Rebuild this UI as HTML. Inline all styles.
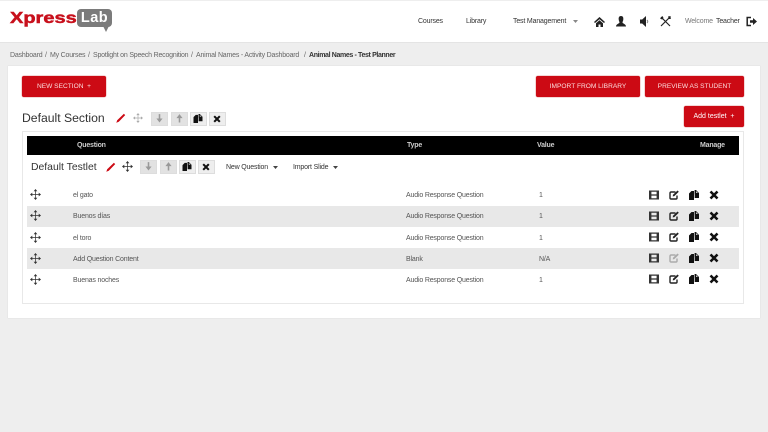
<!DOCTYPE html>
<html><head><meta charset="utf-8"><style>
html,body{margin:0;padding:0;background:#eee}
#p{width:768px;height:432px;overflow:hidden;background:#eee;font-family:"Liberation Sans",sans-serif;position:relative;filter:blur(.25px)}
.a{position:absolute;white-space:nowrap}
.t{font-size:7px;color:#555;line-height:10px;letter-spacing:-.17px}
.btn{position:absolute;background:#cc0a14;border-radius:2px;color:#fbdcdc;font-size:6.6px;line-height:21px;text-align:center;height:21px;box-shadow:0 0 1px #b00}
.g{position:absolute;width:17px;height:14px;background:#e2e2e2;border:1px solid #ddd;box-sizing:border-box}
.row{position:absolute;left:27px;width:712px;height:21px}
.alt{background:#e8e8e8}
svg{position:absolute;overflow:visible}
</style></head><body><div id="p">
<svg width="0" height="0" style="position:absolute"><defs>
<symbol id="move" viewBox="0 0 12 12"><path d="M6 0L8 2.5H6.4V5.6H9.5V4L12 6 9.5 8V6.4H6.4V9.5H8L6 12 4 9.5H5.6V6.4H2.5V8L0 6 2.5 4V5.6H5.6V2.5H4Z" fill="currentColor"/></symbol>
<symbol id="x" viewBox="0 0 10 10"><path d="M1.5 1.5L8.5 8.5M8.5 1.5L1.5 8.5" stroke="currentColor" stroke-width="2.6" fill="none"/></symbol>
<symbol id="copy" viewBox="0 0 10 10"><path d="M0 3.5L2.5 1H5V10H0Z" fill="currentColor"/><path d="M5.6 0H7L10 3V8H5.7V4.5L5.6 4Z" fill="currentColor"/><path d="M7 1V3H9Z" fill="#fff" opacity=".75"/></symbol>
<symbol id="film" viewBox="0 0 10 10"><path fill-rule="evenodd" d="M0 0.5H10V9.5H0ZM2.4 1.7V4.4H7.6V1.7ZM2.4 5.6V8.3H7.6V5.6Z" fill="currentColor"/></symbol>
<symbol id="edit" viewBox="0 0 10 10"><path d="M6.5 2H2.2Q1 2 1 3.2V8Q1 9 2.2 9H7Q8 9 8 8V5.5" stroke="currentColor" stroke-width="1.4" fill="none"/><path d="M4 4.7L8.5 0.5 9.8 1.8 5.3 6.1 3.7 6.4Z" fill="currentColor"/></symbol>
<symbol id="pencil" viewBox="0 0 10 10"><path d="M0.3 9.7L1.2 7.2 7.9 0.8 9.2 2.1 2.8 8.7Z" fill="currentColor"/></symbol>
<symbol id="down" viewBox="0 0 8 10"><path d="M3.1 0H4.9V5H7.5L4 9.5 0.5 5H3.1Z" fill="currentColor"/></symbol>
<symbol id="up" viewBox="0 0 8 10"><path d="M3.1 9.5H4.9V4.5H7.5L4 0 0.5 4.5H3.1Z" fill="currentColor"/></symbol>
</defs></svg>

<!-- header -->
<div class="a" style="left:0;top:1px;width:768px;height:41px;background:#fff;border-bottom:1px solid #e4e4e4"></div>
<div class="a" style="left:10px;top:9px;font-size:16px;font-weight:bold;color:#c8101c;line-height:20px;transform:scaleX(1.25);transform-origin:left top;-webkit-text-stroke:.5px #c8101c">Xpress</div>
<div class="a" style="left:77px;top:9px;width:35px;height:18px;background:#7b7b7b;border-radius:4px;color:#fff;font-size:14.5px;font-weight:bold;line-height:18px;text-align:center;letter-spacing:.5px">Lab</div>
<svg style="left:103px;top:26px" width="7" height="7"><path d="M0 0H6L3 6Z" fill="#7b7b7b"/></svg>

<div class="a t" style="left:418px;top:17px;color:#333">Courses</div>
<div class="a t" style="left:466px;top:17px;color:#333">Library</div>
<div class="a t" style="left:513px;top:17px;color:#333">Test Management</div>
<svg style="left:573px;top:20px" width="5" height="3"><path d="M0 0H5L2.5 3Z" fill="#888"/></svg>
<svg style="left:594px;top:17px" width="11" height="10"><path d="M5.5 0L11 5 10 6 5.5 2.2 1 6 0 5ZM2 6.3L5.5 3.3 9 6.3V10H6.5V7.5H4.5V10H2Z" fill="#222"/></svg>
<svg style="left:616px;top:16px" width="10" height="11"><path d="M5 0C7 0 7.5 1.5 7.3 3.5 7.2 5 6.5 5.5 6.5 6.5 6.5 7.5 10 8 10 10.5H0C0 8 3.5 7.5 3.5 6.5 3.5 5.5 2.8 5 2.7 3.5 2.5 1.5 3 0 5 0Z" fill="#222"/></svg>
<svg style="left:640px;top:16px" width="9" height="11"><path d="M0 3.5H2.2L6 0V11L2.2 7.5H0Z" fill="#222"/><path d="M7 4C8 5 8 6 7 7" stroke="#888" fill="none"/></svg>
<svg style="left:660px;top:16px" width="11" height="11"><path d="M1 1L10 10M10 1L1 10" stroke="#222" stroke-width="1.2"/><path d="M0 2.5L2.5 0 3.5 2 2 3.5ZM8 0.5L10.5 0 10.8 3 8.8 3Z" fill="#222"/></svg>
<div class="a t" style="left:685px;top:17px;color:#777">Welcome</div>
<div class="a t" style="left:716px;top:17px;color:#333">Teacher</div>
<svg style="left:746px;top:16px" width="11" height="11"><path d="M5 1.5H1.2V9.5H5" stroke="#222" stroke-width="1.5" fill="none"/><path d="M4 4.3H7V2L11 5.5 7 9V6.7H4Z" fill="#222"/></svg>

<!-- breadcrumb -->
<div class="a t" style="left:10px;top:51px;color:#666;letter-spacing:-.2px">Dashboard</div>
<div class="a t" style="left:45px;top:51px;color:#666">/</div>
<div class="a t" style="left:50px;top:51px;color:#666;letter-spacing:-.2px">My Courses</div>
<div class="a t" style="left:88px;top:51px;color:#666">/</div>
<div class="a t" style="left:93px;top:51px;color:#666;letter-spacing:-.2px">Spotlight on Speech Recognition</div>
<div class="a t" style="left:191px;top:51px;color:#666">/</div>
<div class="a t" style="left:196px;top:51px;color:#666;letter-spacing:-.2px">Animal Names - Activity Dashboard</div>
<div class="a t" style="left:304px;top:51px;color:#666">/</div>
<div class="a t" style="left:309px;top:51px;color:#333;font-weight:bold;letter-spacing:-.36px">Animal Names - Test Planner</div>

<!-- card -->
<div class="a" style="left:8px;top:66px;width:752px;height:252px;background:#fff;box-shadow:0 0 1px #ccc"></div>
<div class="btn" style="left:22px;top:76px;width:84px">NEW SECTION &nbsp;+</div>
<div class="btn" style="left:536px;top:76px;width:104px">IMPORT FROM LIBRARY</div>
<div class="btn" style="left:645px;top:76px;width:99px">PREVIEW AS STUDENT</div>
<div class="btn" style="left:684px;top:106px;width:60px;color:#fff;font-size:7px">Add testlet &nbsp;+</div>

<div class="a" style="left:22px;top:110px;font-size:12.2px;line-height:16px;color:#333">Default Section</div>
<svg style="left:116px;top:113px;color:#cc0a14" width="10" height="10"><use href="#pencil"/></svg>
<svg style="left:133px;top:113px;color:#aaa" width="10" height="10"><use href="#move"/></svg>
<div class="g" style="left:151px;top:112px"></div><svg style="left:156px;top:114px;color:#999" width="7" height="9"><use href="#down"/></svg>
<div class="g" style="left:171px;top:112px"></div><svg style="left:176px;top:114px;color:#999" width="7" height="9"><use href="#up"/></svg>
<div class="g" style="left:190px;top:112px;background:#eee"></div><svg style="left:193px;top:114px;color:#111" width="10" height="9"><use href="#copy"/></svg>
<div class="g" style="left:209px;top:112px;background:#eee"></div><svg style="left:213px;top:115px;color:#111" width="8" height="8"><use href="#x"/></svg>

<!-- inner panel -->
<div class="a" style="left:22px;top:131px;width:722px;height:173px;background:#fff;border:1px solid #e8e8e8;box-sizing:border-box"></div>
<div class="a" style="left:27px;top:136px;width:712px;height:19px;background:#000"></div>
<div class="a t" style="left:77px;top:141px;color:#ccc;font-weight:bold;letter-spacing:-.2px">Question</div>
<div class="a t" style="left:407px;top:141px;color:#ccc;font-weight:bold;letter-spacing:-.2px">Type</div>
<div class="a t" style="left:537px;top:141px;color:#ccc;font-weight:bold;letter-spacing:-.2px">Value</div>
<div class="a t" style="left:700px;top:141px;color:#ccc;font-weight:bold;letter-spacing:-.2px">Manage</div>

<div class="a" style="left:31px;top:160px;font-size:10.4px;line-height:16px;color:#333">Default Testlet</div>
<svg style="left:106px;top:162px;color:#cc0a14" width="10" height="10"><use href="#pencil"/></svg>
<svg style="left:122px;top:161px;color:#333" width="11" height="11"><use href="#move"/></svg>
<div class="g" style="left:140px;top:160px"></div><svg style="left:145px;top:162px;color:#999" width="7" height="9"><use href="#down"/></svg>
<div class="g" style="left:160px;top:160px"></div><svg style="left:165px;top:162px;color:#999" width="7" height="9"><use href="#up"/></svg>
<div class="g" style="left:179px;top:160px;background:#eee"></div><svg style="left:182px;top:162px;color:#111" width="10" height="9"><use href="#copy"/></svg>
<div class="g" style="left:198px;top:160px;background:#eee"></div><svg style="left:202px;top:163px;color:#111" width="8" height="8"><use href="#x"/></svg>
<div class="a t" style="left:226px;top:163px;color:#333">New Question</div>
<svg style="left:273px;top:166px" width="5" height="3"><path d="M0 0H5L2.5 3Z" fill="#444"/></svg>
<div class="a t" style="left:293px;top:163px;color:#333">Import Slide</div>
<svg style="left:333px;top:166px" width="5" height="3"><path d="M0 0H5L2.5 3Z" fill="#444"/></svg>

<div class="row alt" style="top:206px"></div>
<div class="row alt" style="top:248px"></div>

<!-- row 1 -->
<svg style="left:30px;top:189px;color:#333" width="11" height="11"><use href="#move"/></svg>
<div class="a t" style="left:73px;top:191px">el gato</div><div class="a t" style="left:406px;top:191px">Audio Response Question</div><div class="a t" style="left:539px;top:191px">1</div>
<svg style="left:649px;top:190px;color:#333" width="10" height="10"><use href="#film"/></svg><svg style="left:669px;top:190px;color:#222" width="10" height="10"><use href="#edit"/></svg><svg style="left:689px;top:190px;color:#111" width="10" height="10"><use href="#copy"/></svg><svg style="left:709px;top:190px;color:#111" width="10" height="10"><use href="#x"/></svg>
<!-- row 2 -->
<svg style="left:30px;top:210px;color:#333" width="11" height="11"><use href="#move"/></svg>
<div class="a t" style="left:73px;top:212px">Buenos días</div><div class="a t" style="left:406px;top:212px">Audio Response Question</div><div class="a t" style="left:539px;top:212px">1</div>
<svg style="left:649px;top:211px;color:#333" width="10" height="10"><use href="#film"/></svg><svg style="left:669px;top:211px;color:#222" width="10" height="10"><use href="#edit"/></svg><svg style="left:689px;top:211px;color:#111" width="10" height="10"><use href="#copy"/></svg><svg style="left:709px;top:211px;color:#111" width="10" height="10"><use href="#x"/></svg>
<!-- row 3 -->
<svg style="left:30px;top:232px;color:#333" width="11" height="11"><use href="#move"/></svg>
<div class="a t" style="left:73px;top:234px">el toro</div><div class="a t" style="left:406px;top:234px">Audio Response Question</div><div class="a t" style="left:539px;top:234px">1</div>
<svg style="left:649px;top:232px;color:#333" width="10" height="10"><use href="#film"/></svg><svg style="left:669px;top:232px;color:#222" width="10" height="10"><use href="#edit"/></svg><svg style="left:689px;top:232px;color:#111" width="10" height="10"><use href="#copy"/></svg><svg style="left:709px;top:232px;color:#111" width="10" height="10"><use href="#x"/></svg>
<!-- row 4 -->
<svg style="left:30px;top:253px;color:#333" width="11" height="11"><use href="#move"/></svg>
<div class="a t" style="left:73px;top:255px">Add Question Content</div><div class="a t" style="left:406px;top:255px">Blank</div><div class="a t" style="left:539px;top:255px">N/A</div>
<svg style="left:649px;top:253px;color:#333" width="10" height="10"><use href="#film"/></svg><svg style="left:669px;top:253px;color:#aaa" width="10" height="10"><use href="#edit"/></svg><svg style="left:689px;top:253px;color:#111" width="10" height="10"><use href="#copy"/></svg><svg style="left:709px;top:253px;color:#111" width="10" height="10"><use href="#x"/></svg>
<!-- row 5 -->
<svg style="left:30px;top:274px;color:#333" width="11" height="11"><use href="#move"/></svg>
<div class="a t" style="left:73px;top:276px">Buenas noches</div><div class="a t" style="left:406px;top:276px">Audio Response Question</div><div class="a t" style="left:539px;top:276px">1</div>
<svg style="left:649px;top:274px;color:#333" width="10" height="10"><use href="#film"/></svg><svg style="left:669px;top:274px;color:#222" width="10" height="10"><use href="#edit"/></svg><svg style="left:689px;top:274px;color:#111" width="10" height="10"><use href="#copy"/></svg><svg style="left:709px;top:274px;color:#111" width="10" height="10"><use href="#x"/></svg>
</div></body></html>
